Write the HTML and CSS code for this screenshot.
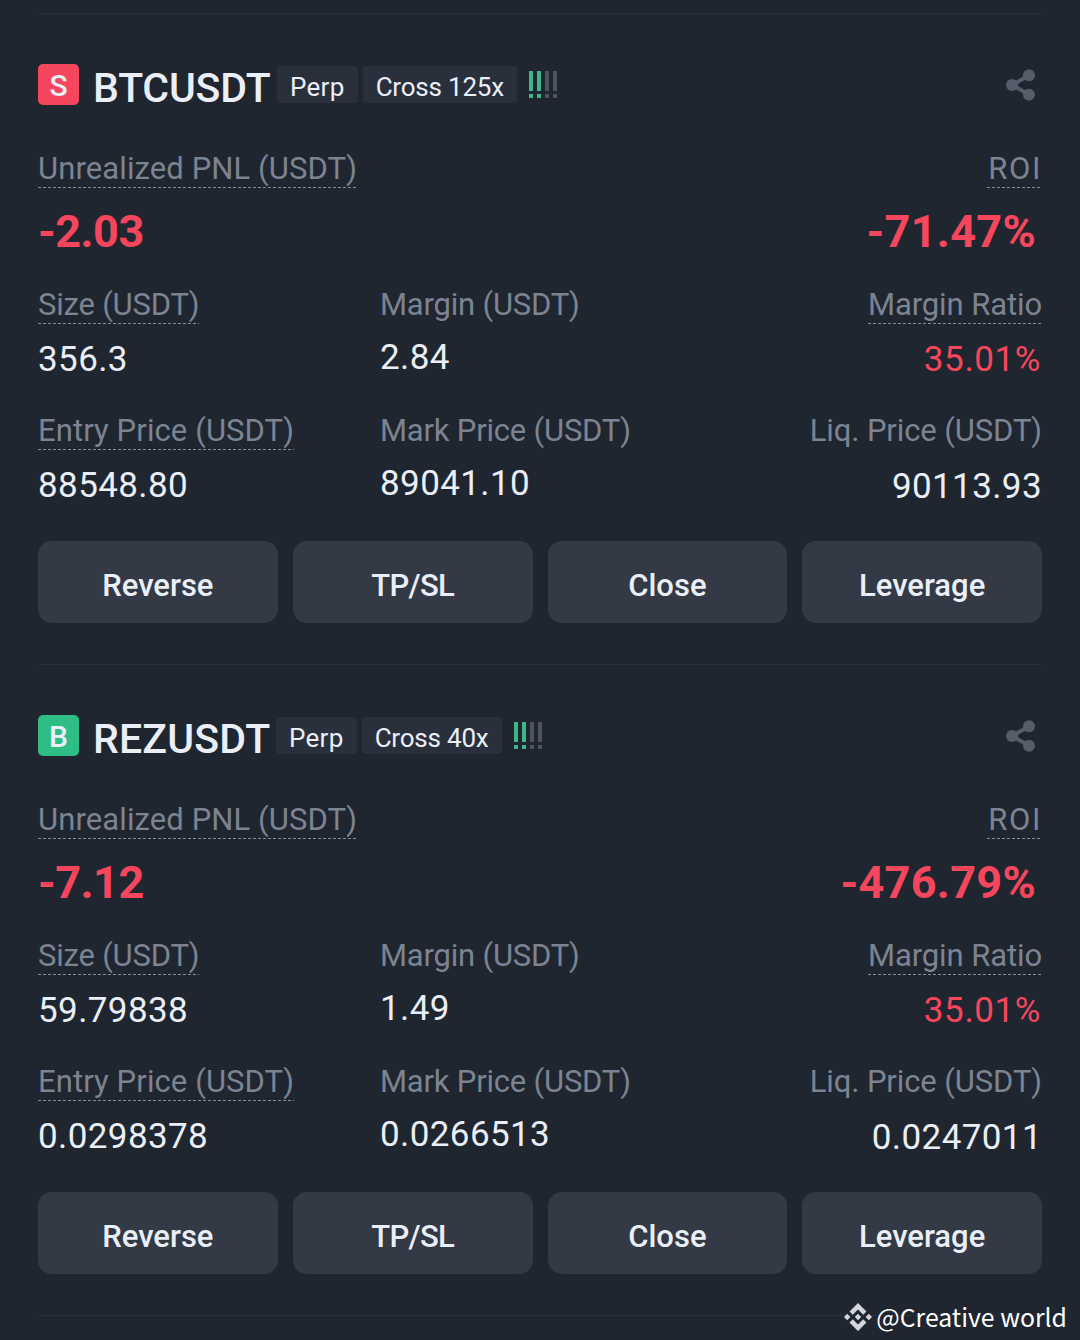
FILE: index.html
```html
<!DOCTYPE html>
<html lang="en">
<head>
  <meta charset="UTF-8">
  <title>Positions</title>
  <meta name="viewport" content="width=device-width, initial-scale=1.0">
  <link rel="stylesheet" href="styles.css">
</head>
<body>

  <main class="positions">
    <section class="position">
      <header class="head">
        <span class="side sell">S</span>
        <h2 class="symbol">BTCUSDT</h2>
        <span class="tag">Perp</span>
        <span class="tag cross">Cross 125x</span>
        <span class="risk"><i class="on"></i><i class="on"></i><i></i><i></i></span>
        <svg class="share" width="32" height="32" viewBox="0 0 32 32">
          <path d="M25 6.5 8 16l17 9.5" fill="none" stroke="currentColor" stroke-width="4"/>
          <circle cx="25" cy="6.3" r="6"/><circle cx="8" cy="16" r="6"/><circle cx="25" cy="25.7" r="6"/>
        </svg>
      </header>

      <div class="row pnl">
        <div class="cell"><span class="label hint l-pnl">Unrealized PNL (USDT)</span><strong class="value red">-2.03</strong></div>
        <div class="cell right"><span class="label hint l-roi">ROI</span><strong class="value red">-71.47%</strong></div>
      </div>
      <div class="row">
        <div class="cell"><span class="label hint">Size (USDT)</span><span class="value">356.3</span></div>
        <div class="cell mid"><span class="label">Margin (USDT)</span><span class="value">2.84</span></div>
        <div class="cell right"><span class="label hint l-ratio">Margin Ratio</span><span class="value red ratio">35.01%</span></div>
      </div>
      <div class="row prices">
        <div class="cell"><span class="label hint l-entry">Entry Price (USDT)</span><span class="value">88548.80</span></div>
        <div class="cell mid"><span class="label">Mark Price (USDT)</span><span class="value">89041.10</span></div>
        <div class="cell right"><span class="label l-liq">Liq. Price (USDT)</span><span class="value">90113.93</span></div>
      </div>

      <div class="actions">
        <button>Reverse</button>
        <button class="narrow">TP/SL</button>
        <button>Close</button>
        <button>Leverage</button>
      </div>
    </section>

    <section class="position">
      <header class="head">
        <span class="side buy">B</span>
        <h2 class="symbol rez">REZUSDT</h2>
        <span class="tag">Perp</span>
        <span class="tag cross">Cross 40x</span>
        <span class="risk"><i class="on"></i><i class="on"></i><i></i><i></i></span>
        <svg class="share" width="32" height="32" viewBox="0 0 32 32">
          <path d="M25 6.5 8 16l17 9.5" fill="none" stroke="currentColor" stroke-width="4"/>
          <circle cx="25" cy="6.3" r="6"/><circle cx="8" cy="16" r="6"/><circle cx="25" cy="25.7" r="6"/>
        </svg>
      </header>

      <div class="row pnl">
        <div class="cell"><span class="label hint l-pnl">Unrealized PNL (USDT)</span><strong class="value red">-7.12</strong></div>
        <div class="cell right"><span class="label hint l-roi">ROI</span><strong class="value red">-476.79%</strong></div>
      </div>
      <div class="row">
        <div class="cell"><span class="label hint">Size (USDT)</span><span class="value">59.79838</span></div>
        <div class="cell mid"><span class="label">Margin (USDT)</span><span class="value">1.49</span></div>
        <div class="cell right"><span class="label hint l-ratio">Margin Ratio</span><span class="value red ratio">35.01%</span></div>
      </div>
      <div class="row prices">
        <div class="cell"><span class="label hint l-entry">Entry Price (USDT)</span><span class="value">0.0298378</span></div>
        <div class="cell mid"><span class="label">Mark Price (USDT)</span><span class="value">0.0266513</span></div>
        <div class="cell right"><span class="label l-liq">Liq. Price (USDT)</span><span class="value">0.0247011</span></div>
      </div>

      <div class="actions">
        <button>Reverse</button>
        <button class="narrow">TP/SL</button>
        <button>Close</button>
        <button>Leverage</button>
      </div>
    </section>
  </main>

  <div class="credit">
    <svg width="28" height="28" viewBox="0 0 28 28">
      <path d="M14 0l8.500 8.500-3.300 3.300L14 6.600l-5.200 5.200-3.300-3.300zM14 28l8.500-8.500-3.300-3.300L14 21.400l-5.200-5.200-3.300 3.300zM3.200 10.800L6.400 14l-3.200 3.200L0 14zM24.800 10.800L28 14l-3.200 3.200-3.200-3.200zM14 10.800l3.200 3.200-3.200 3.200-3.200-3.200z"/>
    </svg>
    <span>@Creative world</span>
  </div>

</body>
</html>
```
FILE: styles.css
```css
* {
  box-sizing: border-box;
}
body {
  margin: 0;
  height: 1340px;
  position: relative;
  overflow: hidden;
  background: #1f2630;
  color: #eaeef6;
  font-family: Roboto, "Liberation Sans", sans-serif;
}
.positions {
  margin: 13px 38px 0;
  border-bottom: 1px solid #29303b;
}
.position {
  border-top: 1px solid #2b323d;
  padding: 50px 0 41px;
}

/* header */
.head {
  display: flex;
  align-items: center;
  height: 41px;
  margin-bottom: 45px;
}
.side {
  width: 41px;
  height: 41px;
  border-radius: 5px;
  font-size: 30px;
  font-weight: 500;
  line-height: 43px;
  text-align: center;
}
.sell { background: #f6465d; }
.buy { background: #2ebd85; }
.symbol {
  width: 184px;
  margin: 8px 0 0 14px;
  font-size: 41px;
  font-weight: 500;
  line-height: 41px;
  letter-spacing: -0.2px;
}
.rez {
  width: 183px;
  letter-spacing: 0.2px;
}
.tag {
  height: 37px;
  padding: 0 13px;
  border-radius: 4px;
  background: #29303c;
  font-size: 26px;
  line-height: 42px;
  letter-spacing: 0.3px;
}
.cross {
  margin-left: 5px;
  letter-spacing: -0.2px;
}
.risk {
  display: flex;
  gap: 4px;
  margin-left: 12px;
  color: #4d5461;
}
.risk i {
  width: 4px;
  height: 27px;
  background: linear-gradient(currentColor 20px, transparent 20px 23px, currentColor 23px);
}
.risk .on {
  color: #3fb68a;
}
.share {
  margin: 0 6px 0 auto;
  color: #565d6a;
  fill: currentColor;
}

/* figures */
.row {
  display: grid;
  grid-template-columns: 342px 1fr 260px;
  height: 126px;
}
.pnl {
  grid-template-columns: 1fr 1fr;
  height: 136px;
}
.prices {
  height: 129px;
}
.cell {
  display: flex;
  flex-direction: column;
  align-items: flex-start;
}
.right {
  align-items: flex-end;
}
.label {
  height: 38px;
  color: #7c8391;
  font-size: 31px;
  line-height: 37px;
  letter-spacing: -0.2px;
  white-space: nowrap;
}
.l-pnl, .l-entry {
  letter-spacing: 0.1px;
}
.l-ratio {
  letter-spacing: -0.1px;
}
.l-liq {
  letter-spacing: -0.1px;
}
.l-roi {
  padding-left: 1px;
  letter-spacing: 1.6px;
}
.hint {
  background: repeating-linear-gradient(90deg, #858c99 0 3px, transparent 3px 5px) bottom / 100% 1px no-repeat;
}
.value {
  font-size: 35px;
  line-height: 72px;
  letter-spacing: 0.4px;
}
.mid .value {
  line-height: 68px;
}
.prices .right .value {
  line-height: 74px;
}
.ratio {
  padding-right: 1px;
  letter-spacing: 0.6px;
}
.pnl .value {
  font-size: 45px;
  line-height: 88px;
  letter-spacing: -0.5px;
}
.pnl .right .value {
  padding-right: 6px;
  letter-spacing: 0.3px;
}
.red {
  color: #f6465d;
}

.actions {
  display: grid;
  grid-template-columns: repeat(4, 1fr);
  gap: 15px;
}
.actions button {
  height: 82px;
  padding: 6px 0 0;
  border: none;
  border-radius: 14px;
  background: #333a46;
  color: #eaeef6;
  font-family: inherit;
  font-size: 31px;
  font-weight: 500;
}
.actions .narrow {
  letter-spacing: -0.7px;
}

.credit {
  position: absolute;
  right: 13px;
  bottom: 6px;
  display: flex;
  align-items: center;
  gap: 4px;
  color: #fff;
  font-family: "Noto Sans CJK SC", sans-serif;
  font-size: 24.8px;
  line-height: 36px;
}
.credit span {
  margin-top: -2px;
}
.credit svg {
  fill: #d3d6dc;
}
```
